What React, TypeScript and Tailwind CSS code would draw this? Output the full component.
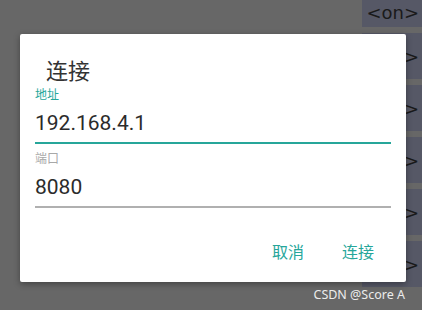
const rows = [0, 1, 2, 3, 4, 5];

function SideList() {
  return (
    <div className="ml-auto flex w-[60px] flex-col gap-[6px] pt-0">
      {rows.map((i) => (
        <div
          key={i}
          className={`flex h-[46px] shrink-0 items-center justify-end bg-[#565866] pr-[3px] text-[18px] text-[#1a1a1a] ${
            i === 0 ? '-mt-[19px] items-end' : ''
          }`}
          style={{ fontFamily: '"DejaVu Sans", sans-serif' }}
        >
          {i === 0 ? <span className="mb-[1px] leading-[26px]">&lt;on&gt;</span> : <span>&gt;</span>}
        </div>
      ))}
    </div>
  );
}

function Field({ label, value, focused }: { label: string; value: string; focused?: boolean }) {
  return (
    <div className="flex flex-col">
      <span className={`text-[12px] leading-[16px] ${focused ? 'text-[#26a69a]' : 'text-[#a8a8a8]'}`}>{label}</span>
      <div
        className={`mt-[8px] pb-[6px] text-[21px] leading-[26px] text-[#2b2b2b] ${
          focused ? 'border-b-2 border-[#26a69a]' : 'border-b-2 border-[#b0b0b0]'
        }`}
        style={{ fontFamily: 'Roboto, "Noto Sans CJK SC", sans-serif' }}
      >
        {value}
      </div>
    </div>
  );
}

export default function App() {
  return (
    <div
      className="relative h-[310px] w-[422px] overflow-hidden bg-[#676767]"
      style={{ fontFamily: '"Noto Sans CJK SC", "Noto Sans", sans-serif' }}
    >
      <div className="flex h-full">
        <SideList />
      </div>

      <div className="absolute left-[20px] top-[34px] flex h-[248px] w-[386px] flex-col rounded-[2px] bg-white shadow-[0_2px_6px_rgba(0,0,0,0.35)]">
        <div className="pl-[26px] pt-[20px] text-[22px] leading-[30px] text-[#333333]">连接</div>
        <div className="mt-[2px] flex flex-col gap-[6px] px-[15px]">
          <Field label="地址" value="192.168.4.1" focused />
          <Field label="端口" value="8080" />
        </div>
        <div className="mt-auto mb-[20px] flex justify-end gap-[38px] pr-[32px] text-[16px] leading-[22px] text-[#26a69a]">
          <span>取消</span>
          <span>连接</span>
        </div>
      </div>

      <div className="absolute right-[17px] bottom-[8px] text-[12.5px] leading-[14px] text-[#ececec]" style={{ fontFamily: '"Noto Sans", sans-serif' }}>
        CSDN @Score A
      </div>
    </div>
  );
}
